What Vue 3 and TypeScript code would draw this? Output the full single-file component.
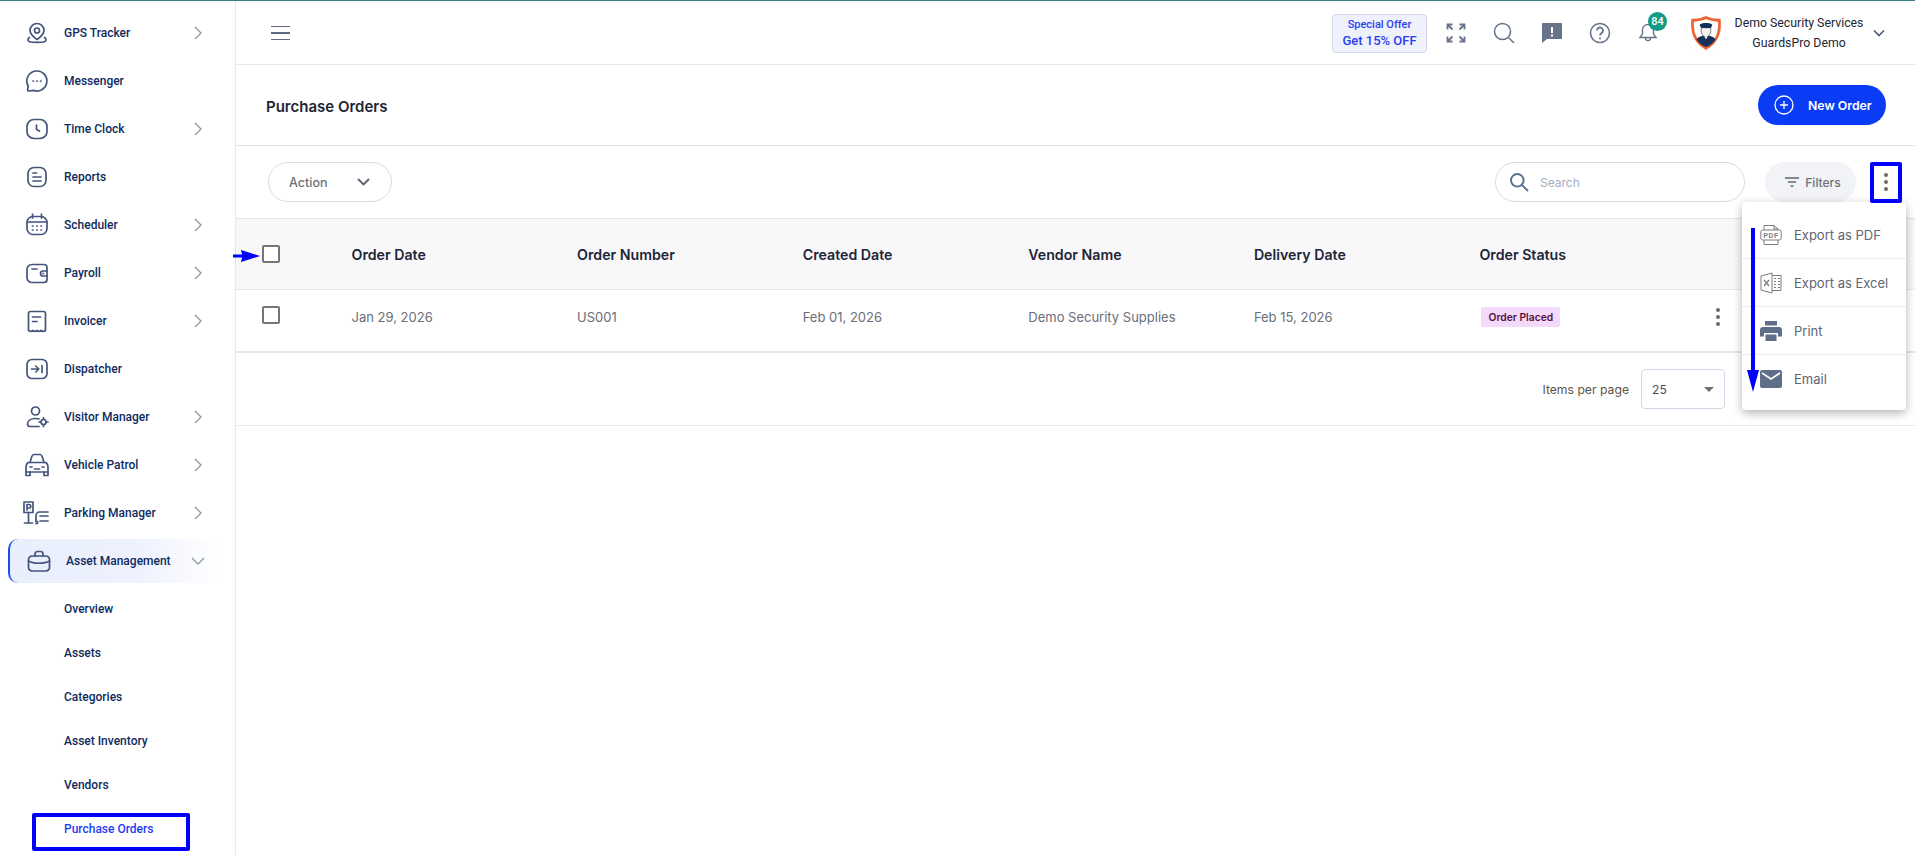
<template>
  <div class="page">
    <aside class="sidebar">
      <div
        v-for="item in navItems"
        :key="item.label"
        class="nav-row"
        :class="{ active: item.active }"
      >
        <svg class="nav-icon" viewBox="0 0 28 24" fill="none">
          <path v-for="d in item.paths" :key="d" :d="d" />
        </svg>
        <span class="nav-label">{{ item.label }}</span>
        <svg v-if="item.arrow" class="nav-chevron" viewBox="0 0 14 14" fill="none">
          <path :d="item.active ? 'M1 4l6 6 6-6' : 'M4 1l6 6-6 6'" />
        </svg>
      </div>
      <div
        v-for="sub in subItems"
        :key="sub"
        class="sub-row"
        :class="{ current: sub === 'Purchase Orders' }"
      >
        {{ sub }}
      </div>
    </aside>

    <main class="content">
      <header class="topbar">
        <button class="burger">
          <span></span>
          <span></span>
          <span></span>
        </button>
        <div class="top-right">
          <div class="offer">
            <div class="offer-small">Special Offer</div>
            <div class="offer-big">Get 15% OFF</div>
          </div>
          <div class="top-icon">
            <svg width="20" height="20" viewBox="0 0 20 20" fill="none" stroke="#667389" stroke-width="1.8">
              <path d="M1.5 6.5v-5h5M1.5 1.5l5 5M13.5 1.5h5v5M18.5 1.5l-5 5M1.500 13.5v5h5M1.5 18.5l5-5M18.5 13.5v5h-5M18.5 18.5l-5-5" />
            </svg>
          </div>
          <div class="top-icon">
            <svg width="22" height="22" viewBox="0 0 22 22" fill="none" stroke="#667389" stroke-width="1.5">
              <circle cx="9.5" cy="9.5" r="8" />
              <path d="M15.5 15.5l5.5 5.5" />
            </svg>
          </div>
          <div class="top-icon">
            <svg width="22" height="22" viewBox="0 0 22 22">
              <path d="M2 1h18a1 1 0 0 1 1 1v14a1 1 0 0 1-1 1H6l-5 4V2a1 1 0 0 1 1-1z" fill="#667389" />
              <path d="M10 5h2v6h-2zM10 12.5h2v2h-2z" fill="#fff" />
            </svg>
          </div>
          <div class="top-icon">
            <svg width="22" height="22" viewBox="0 0 22 22" fill="none" stroke="#667389" stroke-width="1.6">
              <circle cx="11" cy="11" r="9.5" />
              <path d="M8 8.5a3 3 0 1 1 4.5 2.6c-1 .6-1.5 1.2-1.5 2.4" stroke-width="1.8" />
              <path d="M11 15.5v1.8" stroke-width="1.8" />
            </svg>
          </div>
          <div class="top-icon bell">
            <svg width="22" height="22" viewBox="0 0 22 22" fill="none" stroke="#667389" stroke-width="1.4">
              <path d="M11 2.5c-3.5 0-5.5 2.5-5.5 5.5v3c0 2-1.5 3-2.5 4.500h16c-1-1.500-2.500-2.500-2.500-4.500V8c0-3-2-5.500-5.500-5.500z" />
              <path d="M8.5 16c0 3.5 5 3.5 5 0" />
            </svg>
            <span class="bell-badge">84</span>
          </div>
          <div class="avatar">
            <svg width="32" height="34" viewBox="0 0 30 32">
              <path d="M15 1.5c4 2 8 2.5 12.5 2.5 1 10-1 20-12.5 26.5C3.500 24 1.500 14 2.500 4 7 4 11 3.500 15 1.500z" fill="#fff" stroke="#ee6432" stroke-width="2.6" />
              <path d="M6 22c2-3 5-3.5 9-4 4 .5 7 1 9 4-2 3-5 5.5-9 7.5-4-2-7-4.5-9-7.5z" fill="#16305c" />
              <path d="M10.5 11h9v3c0 3-2 5.5-4.5 5.500s-4.500-2.500-4.500-5.500z" fill="#f7f2ee" stroke="#3a4660" stroke-width=".6" />
              <path d="M9 8.5c1.5-2.5 10.5-2.5 12 0l-1.5 2.8h-9z" fill="#16305c" />
              <path d="M13.5 19h3l-1.5 3z" fill="#fff" />
            </svg>
          </div>
          <div class="user">
            <div>Demo Security Services</div>
            <div>GuardsPro Demo</div>
          </div>
          <svg class="user-chevron" width="12" height="8" viewBox="0 0 12 8" fill="none">
            <path d="M1 1.5l5 5 5-5" />
          </svg>
        </div>
      </header>

      <section class="page-head">
        <h1>Purchase Orders</h1>
        <button class="new-order">
          <svg width="20" height="20" viewBox="0 0 20 20" fill="none" stroke="#fff" stroke-width="1.3">
            <circle cx="10" cy="10" r="9" />
            <path d="M10 6v8M6 10h8" />
          </svg>
          New Order
        </button>
      </section>

      <section class="toolbar">
        <div class="action">
          <span>Action</span>
          <svg width="13" height="8" viewBox="0 0 13 8" fill="none">
            <path d="M1 1l5.5 5.5L12 1" />
          </svg>
        </div>
        <div class="tools">
          <label class="search">
            <svg width="20" height="20" viewBox="0 0 20 20" fill="none" stroke="#5b6f90" stroke-width="1.9">
              <circle cx="8.3" cy="8.3" r="6.3" />
              <path d="M13 13l6 6" />
            </svg>
            <input type="text" placeholder="Search" />
          </label>
          <button class="filters">
            <svg width="14" height="10" viewBox="0 0 14 10" fill="none" stroke="#5f6672" stroke-width="1.4">
              <path d="M0 1h14M3 5h8M5.5 9h3" />
            </svg>
            Filters
          </button>
          <div class="more">
            <i></i>
            <i></i>
            <i></i>
          </div>
        </div>
      </section>

      <div class="table-row table-head">
        <div class="cell-check"><span class="check"></span></div>
        <div v-for="col in columns" :key="col">{{ col }}</div>
      </div>
      <div v-for="order in orders" :key="order.number" class="table-row table-body">
        <div class="cell-check"><span class="check"></span></div>
        <div>{{ order.date }}</div>
        <div>{{ order.number }}</div>
        <div>{{ order.created }}</div>
        <div>{{ order.vendor }}</div>
        <div>{{ order.delivery }}</div>
        <div><span class="status">{{ order.status }}</span></div>
        <div class="row-more">
          <i></i>
          <i></i>
          <i></i>
        </div>
      </div>

      <div class="pager">
        <span>Items per page</span>
        <div class="per-page">
          <span>25</span>
          <b></b>
        </div>
      </div>
    </main>

    <!-- export menu -->
    <div class="menu">
      <div class="menu-item">
        <svg width="22" height="22" viewBox="0 0 22 22" fill="none" stroke="#7c7c7c" stroke-width="1">
          <path d="M4 6V1.5h10L18 5v1M4 16v4.5h14V16" />
          <path d="M14 1.5V5h4" />
          <rect x=".8" y="6" width="20.4" height="10" rx="2" />
          <text x="11" y="14" text-anchor="middle" font-size="7.5" font-weight="600" fill="#7c7c7c" stroke="none" font-family="Roboto, sans-serif" letter-spacing=".6">PDF</text>
        </svg>
        <span>Export as PDF</span>
      </div>
      <div class="menu-item">
        <svg width="22" height="22" viewBox="0 0 22 22" fill="none" stroke="#7c7c7c" stroke-width="1">
          <path d="M1 4l11-3v20L1 18z" />
          <path d="M12 3.5h9v15h-9" />
          <path d="M4 8l5 6M9 8l-5 6" stroke-width="1.3" />
          <path d="M14 6.5h2M18 6.5h2M14 9.5h2M18 9.5h2M14 12.5h2M18 12.5h2M14 15.5h2M18 15.5h2" />
        </svg>
        <span>Export as Excel</span>
      </div>
      <div class="menu-item">
        <svg width="22" height="20" viewBox="0 0 22 20">
          <path d="M5 0h12v4.5H5zM3 6h16a3 3 0 0 1 3 3v6.5h-4V12H4v3.5H0V9a3 3 0 0 1 3-3zM5.5 13.5h11V20h-11z" fill="#5f6f8a" />
        </svg>
        <span>Print</span>
      </div>
      <div class="menu-item">
        <svg width="22" height="18" viewBox="0 0 22 18">
          <rect width="22" height="18" rx="2" fill="#5f6f8a" />
          <path d="M2 3l9 6 9-6" fill="none" stroke="#fff" stroke-width="1.6" />
        </svg>
        <span>Email</span>
      </div>
    </div>

    <!-- blue annotations drawn on the screenshot -->
    <div class="mark mark-nav"></div>
    <div class="mark mark-more"></div>
    <svg class="arrow arrow-check" width="27" height="12" viewBox="0 0 27 12">
      <path d="M0 4.5h9L8 0l19 6-19 6 1-4.5H0z" fill="#0000ff" />
    </svg>
    <svg class="arrow arrow-menu" width="12" height="164" viewBox="0 0 12 164">
      <path d="M4 0h4v142h4l-6 22-6-22h4z" fill="#0000ff" />
    </svg>
  </div>
</template>

<script setup lang="ts">
interface NavItem {
  label: string
  arrow: boolean
  active?: boolean
  paths: string[]
}

const navItems: NavItem[] = [
  {
    label: 'GPS Tracker',
    arrow: true,
    paths: [
      'M14 2.5a7 7 0 0 1 7 7c0 3.5-3.5 6.5-7 9-3.5-2.5-7-5.5-7-9a7 7 0 0 1 7-7z',
      'M14 7a2.5 2.5 0 1 1 0 5 2.5 2.5 0 0 1 0-5z',
      'M6.5 16.5c-2 1.2-2 3.5 0 4.2 2 .8 13 .8 15 0 2-.7 2-3 0-4.2',
    ],
  },
  {
    label: 'Messenger',
    arrow: false,
    paths: [
      'M14 2a10 10 0 1 1-3.5 19.4L5.5 22c-.6 0-1-.4-.9-1l.6-4A10 10 0 0 1 14 2z',
      'M10 12h.5M13.8 12h.5M17.5 12h.5',
    ],
  },
  {
    label: 'Time Clock',
    arrow: true,
    paths: [
      'M11 2.5h6a7 7 0 0 1 7 7v5a7 7 0 0 1-7 7h-6a7 7 0 0 1-7-7v-5a7 7 0 0 1 7-7z',
      'M13.5 8v4.5l3 1.5',
    ],
  },
  {
    label: 'Reports',
    arrow: false,
    paths: [
      'M11 2.5h6a6 6 0 0 1 6 6v7a6 6 0 0 1-6 6h-6a6 6 0 0 1-6-6v-7a6 6 0 0 1 6-6z',
      'M10 8h3.5M10 12h8M10 16h8',
    ],
  },
  {
    label: 'Scheduler',
    arrow: true,
    paths: [
      'M10 3.5h8a6 6 0 0 1 6 6v6a6 6 0 0 1-6 6h-8a6 6 0 0 1-6-6v-6a6 6 0 0 1 6-6z',
      'M9.5 1v4M18.5 1v4M4 9h20',
      'M9.5 13h.5M13.8 13h.5M18 13h.5M9.5 17h.5M13.8 17h.5M18 17h.5',
    ],
  },
  {
    label: 'Payroll',
    arrow: true,
    paths: [
      'M9 3.5h12a3 3 0 0 1 3 3v12a3 3 0 0 1-3 3H9a5 5 0 0 1-5-5V8.5a5 5 0 0 1 5-5z',
      'M9 8h5',
      'M24 10h-4a2.5 2.5 0 0 0 0 5h4',
      'M20 12.5h.5',
    ],
  },
  {
    label: 'Invoicer',
    arrow: true,
    paths: [
      'M7.5 2.5h13a2 2 0 0 1 2 2v17c-1.5 1.2-3 1.2-4.5 0-1.5 1.2-2.5 1.2-4 0-1.5 1.2-2.5 1.2-4 0-1.5 1.2-3 1.2-4.5 0v-17a2 2 0 0 1 2-2z',
      'M9.5 8h8M9.5 12.5h4.5',
    ],
  },
  {
    label: 'Dispatcher',
    arrow: false,
    paths: [
      'M9 2.5h10a5 5 0 0 1 5 5v9a5 5 0 0 1-5 5H9a5 5 0 0 1-5-5v-9a5 5 0 0 1 5-5z',
      'M8.5 12h7M12.8 9l3 3-3 3M19 8.5v7',
    ],
  },
  {
    label: 'Visitor Manager',
    arrow: true,
    paths: [
      'M12.5 2a4 4 0 1 1 0 8 4 4 0 0 1 0-8z',
      'M16 21.5H7c-1.5 0-2.5-1-2.5-2.5 0-3.5 3.5-5.5 8-5.5 1.5 0 2.5.2 3.5.5',
      'M20.5 14.5a2.5 2.5 0 1 1 0 5 2.5 2.5 0 0 1 0-5zM20.5 12.5v2M20.5 19.5v2M25 17h-2M18 17h-2',
    ],
  },
  {
    label: 'Vehicle Patrol',
    arrow: true,
    paths: [
      'M7 9.5l1.8-6c.4-1 1.2-2 2.2-2h6c1 0 1.8 1 2.2 2l1.8 6',
      'M5 9.5h18c1.2 1 2 2.5 2 4.5v5H3v-5c0-2 .8-3.5 2-4.5z',
      'M3 19v3.5h4V19M21 19v3.5h4V19M7 14h2M19 14h2M11.5 16h5',
    ],
  },
  {
    label: 'Parking Manager',
    arrow: true,
    paths: [
      'M1 1h9v10.5H1z',
      'M4 9V3.5h2a1.5 1.5 0 0 1 0 3.5H4',
      'M5.5 11.5V22M1.5 22h8',
      'M17 11h8M25 15h-8M25 20h-8M13 20.5v-6a3.5 3.5 0 0 1 3.5-3.5H18M13 20.5h1.5v2H13',
    ],
  },
  {
    label: 'Asset Management',
    arrow: true,
    active: true,
    paths: [
      'M7 7h14a3.5 3.5 0 0 1 3.5 3.5v8a3.5 3.5 0 0 1-3.5 3.5H7a3.5 3.5 0 0 1-3.5-3.5v-8A3.5 3.5 0 0 1 7 7z',
      'M10 7V5a2.5 2.5 0 0 1 2.5-2.5h3A2.5 2.5 0 0 1 18 5v2',
      'M3.5 12c5 3 16 3 21 0M13.8 14h.5',
    ],
  },
]

const subItems = ['Overview', 'Assets', 'Categories', 'Asset Inventory', 'Vendors', 'Purchase Orders']

const columns = ['Order Date', 'Order Number', 'Created Date', 'Vendor Name', 'Delivery Date', 'Order Status']

const orders = [
  {
    date: 'Jan 29, 2026',
    number: 'US001',
    created: 'Feb 01, 2026',
    vendor: 'Demo Security Supplies',
    delivery: 'Feb 15, 2026',
    status: 'Order Placed',
  },
]
</script>

<style>
html,
body {
  margin: 0;
  background: #fff;
}
</style>

<style scoped>
.page {
  position: relative;
  display: flex;
  width: 1915px;
  height: 855px;
  overflow: hidden;
  border-top: 1px solid #3a8082;
  box-sizing: border-box;
  background: #fff;
  font-family: Inter, "Noto Sans", sans-serif;
}

.sidebar {
  flex: 0 0 236px;
  box-sizing: border-box;
  padding-top: 8px;
  border-right: 1px solid #e6e9f0;
  font-family: Roboto, sans-serif;
  font-size: 12px;
  font-weight: 500;
  color: #0e2b5e;
}

.nav-row {
  display: flex;
  align-items: center;
  height: 48px;
  padding: 0 30px 0 23px;
}

.nav-row.active {
  height: 44px;
  margin: 2px 15px 4px 8px;
  padding: 0 15px 0 15px;
  border-left: 2px solid #1f4cf0;
  border-radius: 10px 0 0 10px;
  background: linear-gradient(90deg, #e9eefd 0%, #eef2fe 60%, #fff 100%);
}

.nav-icon {
  flex: 0 0 28px;
  width: 28px;
  height: 24px;
  overflow: visible;
  stroke: #44557c;
  stroke-width: 1.7;
  stroke-linecap: round;
  stroke-linejoin: round;
}

.nav-label {
  margin-left: 13px;
}

.nav-chevron {
  flex: 0 0 14px;
  width: 14px;
  height: 14px;
  margin-left: auto;
  stroke: #8e96a8;
  stroke-width: 1.3;
}

.sub-row {
  display: flex;
  align-items: center;
  height: 44px;
  padding-left: 64px;
}

.sub-row.current {
  color: #1f3cf5;
}

.content {
  flex: 1;
  min-width: 0;
}

.topbar {
  display: flex;
  align-items: center;
  justify-content: space-between;
  box-sizing: border-box;
  height: 64px;
  padding: 1px 30px 0 35px;
  border-bottom: 1px solid #e3e7ef;
}

.burger {
  display: flex;
  flex-direction: column;
  gap: 5px;
  width: 19px;
  padding: 0;
  border: none;
  background: none;
}

.burger span {
  display: block;
  height: 1.5px;
  background: #5f6b80;
}

.top-right {
  display: flex;
  align-items: center;
}

.offer {
  box-sizing: border-box;
  width: 95px;
  height: 39px;
  margin-right: 5px;
  padding-top: 3px;
  border: 1px solid #d3d9ea;
  border-radius: 4px;
  background: #eff1fd;
  color: #2b3ff0;
  font-family: Roboto, sans-serif;
  font-weight: 500;
  text-align: center;
}

.offer-small {
  font-size: 11px;
  line-height: 14px;
}

.offer-big {
  font-size: 13px;
  line-height: 17px;
}

.top-icon {
  position: relative;
  display: flex;
  align-items: center;
  justify-content: center;
  width: 48px;
}

.bell-badge {
  position: absolute;
  top: -10px;
  left: 24px;
  width: 19px;
  height: 19px;
  border-radius: 50%;
  background: #129b85;
  color: #fff;
  font-family: Roboto, sans-serif;
  font-size: 11px;
  font-weight: 500;
  line-height: 19px;
  text-align: center;
}

.avatar {
  display: flex;
  align-items: center;
  justify-content: center;
  width: 39px;
  height: 39px;
  margin-left: 14px;
  border-radius: 50%;
  box-shadow: 0 0 2px #ececec;
}

.user {
  width: 132px;
  margin-left: 8px;
  color: #1c2433;
  font-family: Roboto, sans-serif;
  font-size: 12.3px;
  line-height: 20px;
  text-align: center;
  white-space: nowrap;
}

.user-chevron {
  margin-left: 8px;
  stroke: #4f5d74;
  stroke-width: 1.7;
}

.page-head {
  display: flex;
  align-items: center;
  justify-content: space-between;
  box-sizing: border-box;
  height: 81px;
  padding: 0 29px 0 30px;
  border-bottom: 1px solid #dfe3ea;
}

.page-head h1 {
  margin: 2px 0 0;
  color: #1d2535;
  font-size: 15px;
  font-weight: 600;
}

.new-order {
  display: flex;
  align-items: center;
  gap: 14px;
  width: 128px;
  height: 40px;
  padding: 0 0 0 16px;
  border: none;
  border-radius: 20px;
  background: #0a3cf6;
  color: #fff;
  font-family: Inter, sans-serif;
  font-size: 12.3px;
  font-weight: 600;
}

.toolbar {
  display: flex;
  justify-content: space-between;
  box-sizing: border-box;
  height: 72px;
  padding: 16px 13px 0 32px;
}

.action {
  display: flex;
  align-items: center;
  justify-content: space-between;
  box-sizing: border-box;
  width: 124px;
  height: 40px;
  padding: 0 21px 0 20px;
  border: 1px solid #dcdcdc;
  border-radius: 20px;
  color: #6d7179;
  font-size: 12.5px;
  font-weight: 500;
}

.action svg {
  stroke: #5b616c;
  stroke-width: 1.8;
}

.tools {
  display: flex;
  align-items: flex-start;
}

.search {
  display: flex;
  align-items: center;
  gap: 11px;
  box-sizing: border-box;
  width: 250px;
  height: 40px;
  padding: 0 13px;
  border: 1px solid #d9dcdf;
  border-radius: 20px;
}

.search input {
  width: 170px;
  padding: 0;
  border: none;
  outline: none;
  font-family: Inter, sans-serif;
  font-size: 12px;
}

.search input::placeholder {
  color: #a2aebf;
}

.filters {
  display: flex;
  align-items: center;
  justify-content: center;
  gap: 6px;
  width: 91px;
  height: 40px;
  margin-left: 20px;
  padding: 0 0 0 5px;
  border: none;
  border-radius: 20px;
  background: #f2f3f7;
  color: #6d7179;
  font-family: Inter, sans-serif;
  font-size: 12px;
  font-weight: 500;
}

.more {
  display: flex;
  flex-direction: column;
  align-items: center;
  justify-content: center;
  gap: 3px;
  width: 32px;
  height: 40px;
  margin-left: 14px;
}

.more i,
.row-more i {
  display: block;
  width: 4px;
  height: 4px;
  border-radius: 50%;
  background: #6b6b6b;
}

.table-row {
  display: grid;
  grid-template-columns: 115.5px repeat(5, 225.6px) 225px 1fr;
  align-items: center;
  box-sizing: border-box;
}

.table-head {
  height: 72px;
  border-top: 1px solid #e2e4e9;
  border-bottom: 1px solid #e3e6ee;
  background: #f8f8fb;
  color: #1d2535;
  font-size: 14.2px;
  font-weight: 600;
}

.table-body {
  height: 63px;
  padding-bottom: 8px;
  border-bottom: 2px solid #e2e6f0;
  color: #6a6e78;
  font-size: 13px;
}

.cell-check {
  padding-left: 26px;
}

.table-body .cell-check {
  margin-top: -4px;
}

.check {
  display: block;
  box-sizing: border-box;
  width: 18px;
  height: 18px;
  border: 2px solid #757575;
  border-radius: 2px;
  background: #fff;
}

.status {
  display: inline-block;
  margin-left: 2px;
  padding: 0 7px;
  border-radius: 2px;
  background: #f3dafb;
  color: #5a0f3c;
  font-size: 10.3px;
  font-weight: 600;
  line-height: 20px;
}

.row-more {
  display: flex;
  flex-direction: column;
  gap: 3px;
  padding-left: 12px;
}

.pager {
  display: flex;
  align-items: center;
  justify-content: flex-end;
  box-sizing: border-box;
  height: 73px;
  padding-right: 190px;
  border-bottom: 1px solid #e6e8ef;
  color: #5e5347;
  font-size: 12.2px;
}

.per-page {
  display: flex;
  align-items: center;
  justify-content: space-between;
  box-sizing: border-box;
  width: 84px;
  height: 40px;
  margin-left: 12px;
  padding: 0 10px;
  border: 1px solid #cfd8e6;
  border-radius: 4px;
  color: #4b4f57;
}

.per-page b {
  width: 0;
  height: 0;
  border-top: 5px solid #6e7278;
  border-left: 5px solid transparent;
  border-right: 5px solid transparent;
}

.menu {
  position: absolute;
  top: 201px;
  left: 1742px;
  box-sizing: border-box;
  width: 164px;
  height: 208px;
  padding-top: 9px;
  border-radius: 4px;
  background: #fff;
  box-shadow: 0 3px 10px rgba(0, 0, 0, 0.3);
}

.menu-item {
  display: flex;
  align-items: center;
  box-sizing: border-box;
  height: 48px;
  padding-left: 18px;
  border-bottom: 1px solid #f1e9ee;
  color: #5f6672;
  font-size: 13px;
}

.menu-item:last-child {
  border-bottom: none;
}

.menu-item svg {
  flex: 0 0 22px;
}

.menu-item span {
  margin-left: 12px;
}

.mark {
  position: absolute;
  box-sizing: border-box;
  border: 4px solid #0000ff;
  border-radius: 2px;
}

.mark-nav {
  top: 812px;
  left: 32px;
  width: 158px;
  height: 38px;
}

.mark-more {
  top: 161px;
  left: 1870px;
  width: 32px;
  height: 41px;
}

.arrow {
  position: absolute;
}

.arrow-check {
  top: 249px;
  left: 233px;
}

.arrow-menu {
  top: 227px;
  left: 1747px;
}
</style>
